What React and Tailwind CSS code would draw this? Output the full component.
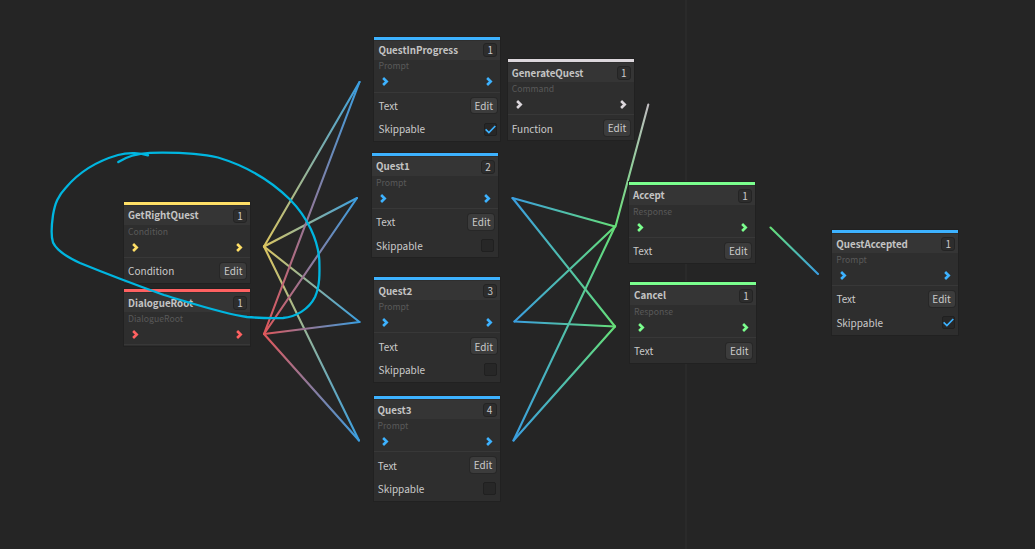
import React from 'react';

const BLUE = '#3db2ff';
const GREEN = '#7bff8e';
const YELLOW = '#ffdf66';
const RED = '#ff6161';
const GREY = '#dcd7dc';

const nodes = [
  { title: 'GetRightQuest', type: 'Condition', order: 1, x: 124, y: 202, color: YELLOW, field: 'Condition' },
  { title: 'DialogueRoot', type: 'DialogueRoot', order: 1, x: 124, y: 289.3, color: RED },
  { title: 'QuestInProgress', type: 'Prompt', order: 1, x: 374.4, y: 36.5, color: BLUE, field: 'Text', skippable: true },
  { title: 'GenerateQuest', type: 'Command', order: 1, x: 507.7, y: 59.3, color: GREY, field: 'Function' },
  { title: 'Quest1', type: 'Prompt', order: 2, x: 372, y: 153, color: BLUE, field: 'Text', skippable: false },
  { title: 'Quest2', type: 'Prompt', order: 3, x: 374.4, y: 277.4, color: BLUE, field: 'Text', skippable: false },
  { title: 'Quest3', type: 'Prompt', order: 4, x: 373.6, y: 396.3, color: BLUE, field: 'Text', skippable: false },
  { title: 'Accept', type: 'Response', order: 1, x: 629, y: 182, color: GREEN, field: 'Text' },
  { title: 'Cancel', type: 'Response', order: 1, x: 630, y: 282, color: GREEN, field: 'Text' },
  { title: 'QuestAccepted', type: 'Prompt', order: 1, x: 832.3, y: 230.2, color: BLUE, field: 'Text', skippable: true },
];

const LINE_BLUE = '#3a9ee0';
const LINE_GREEN = '#66df78';
const LINE_YELLOW = '#dcc560';
const LINE_RED = '#e0575a';

// x1, y1, x2, y2, start color, end color
const links = [
  [264, 246.5, 359.5, 82, LINE_YELLOW, LINE_BLUE],
  [264, 246.5, 357, 198, LINE_YELLOW, LINE_BLUE],
  [264, 246.5, 359.5, 322, LINE_YELLOW, LINE_BLUE],
  [264, 246.5, 359, 440.5, LINE_YELLOW, LINE_BLUE],
  [264, 334, 359.5, 82, LINE_RED, LINE_BLUE],
  [264, 334, 357, 198, LINE_RED, LINE_BLUE],
  [264, 334, 359.5, 322, LINE_RED, LINE_BLUE],
  [264, 334, 359, 440.5, LINE_RED, LINE_BLUE],
  [512.5, 198, 615, 226.5, LINE_BLUE, LINE_GREEN],
  [512.5, 198, 615, 326.5, LINE_BLUE, LINE_GREEN],
  [514.5, 321.5, 615, 226.5, LINE_BLUE, LINE_GREEN],
  [514.5, 321.5, 615, 326.5, LINE_BLUE, LINE_GREEN],
  [513.5, 440.5, 615, 226.5, LINE_BLUE, LINE_GREEN],
  [513.5, 440.5, 615, 326.5, LINE_BLUE, LINE_GREEN],
  [648.3, 104.5, 615.5, 226.5, '#c0bcc0', LINE_GREEN],
  [770.5, 227.5, 818, 274, LINE_GREEN, LINE_BLUE],
];

const Arrow = ({ color }) => (
  <svg width="7" height="9" viewBox="0 0 7 9" fill="none" stroke={color} strokeWidth="2.6">
    <path d="M1.1 1 L4.7 4.5 L1.1 8" />
  </svg>
);

const Row = ({ label, children }) => (
  <div className="flex h-[23.7px] items-center justify-between pl-[4.1px] pr-[3.7px]">
    <span className="pt-[0.8px]">{label}</span>
    {children}
  </div>
);

const Node = ({ node }) => (
  <div
    className="absolute w-[126px] bg-[#2e2e2e] text-[10px] leading-none text-[#cacaca] shadow-[0_0_0_1px_#212121]"
    style={{ left: node.x, top: node.y }}
  >
    <div className="h-[3px]" style={{ backgroundColor: node.color }} />
    <div className="mt-px flex h-[19px] items-center justify-between bg-[#353535] pl-[4px] pr-[3px]">
      <span className="pt-[1.4px] text-[9.75px] font-bold text-[#c4c4c4]">{node.title}</span>
      <span className="flex h-[14px] w-[14px] items-center justify-center rounded-[3px] border border-[#242424] bg-[#2d2d2d]">
        {node.order}
      </span>
    </div>
    <div className="flex h-[12.5px] items-center pl-[4px] pt-[1.6px] text-[8.7px] text-[#595959]">{node.type}</div>
    <div className="flex h-[19.5px] items-center justify-between pl-[8px] pr-[7px]">
      <Arrow color={node.color} />
      <Arrow color={node.color} />
    </div>
    <div className="mb-px h-px bg-[#383838]" />
    {node.field && (
      <Row label={node.field}>
        <button className="flex h-[15.5px] w-[26px] items-center justify-center rounded-[3px] bg-[#3c3c3c] pt-[0.6px] shadow-[0_0_0_1px_#272727]">
          Edit
        </button>
      </Row>
    )}
    {node.skippable !== undefined && (
      <Row label="Skippable">
        <span className="flex h-[13px] w-[13px] items-center justify-center rounded-[2px] border border-[#202020] bg-[#272727]">
          {node.skippable && (
            <svg className="shrink-0" width="11" height="9" viewBox="0 0 11 9" fill="none" stroke={BLUE} strokeWidth="1.7">
              <path d="M0.6 4.3 L3.9 7.5 L10.3 1" />
            </svg>
          )}
        </span>
      </Row>
    )}
  </div>
);

const App = () => {
  return (
    <main className="relative h-[549px] w-[1035px] overflow-hidden bg-[#252525] font-['Noto_Sans_CJK_SC','Noto_Sans',sans-serif]">
      {/* Canvas guide */}
      <div className="absolute left-[685px] top-0 h-full w-[2px] bg-[#2a2a2a]" />

      {/* Connections */}
      <svg className="absolute left-0 top-0" width="1035" height="549">
        <defs>
          {links.map(([x1, y1, x2, y2, from, to], i) => (
            <linearGradient key={i} id={`link-${i}`} gradientUnits="userSpaceOnUse" x1={x1} y1={y1} x2={x2} y2={y2}>
              <stop offset="0" stopColor={from} />
              <stop offset="1" stopColor={to} />
            </linearGradient>
          ))}
        </defs>
        {links.map(([x1, y1, x2, y2], i) => (
          <line key={i} x1={x1} y1={y1} x2={x2} y2={y2} stroke={`url(#link-${i})`} strokeWidth="2.1" strokeLinecap="round" />
        ))}
      </svg>

      {nodes.map((node) => (
        <Node key={node.title} node={node} />
      ))}

      {/* Pen stroke */}
      <svg className="absolute left-0 top-0" width="1035" height="549" fill="none">
        <path
          d="M118.3 162 C127 156 138 153.5 150 152.8 C173 152.3 199 153 218 157.5 C243 165 267 177 290 199.5 C308 218 318 240 319.3 260 C319.7 273 320 286 315 297 C309 309 296 317 283 318 C271 318.5 259 318 247 317 C222 313.5 193 303.5 164 295 C136 285 107 274 80 263 C69 258 57 251 53 242.5 C50.5 235 52 222 53 215 C55 203 58 196 66 187.5 C80 171 99 160.5 118 155 C129 152 141 153 148 155.3"
          stroke="#00b6e0"
          strokeWidth="2.3"
          strokeLinecap="round"
          strokeLinejoin="round"
        />
      </svg>
    </main>
  );
};

export default App;
